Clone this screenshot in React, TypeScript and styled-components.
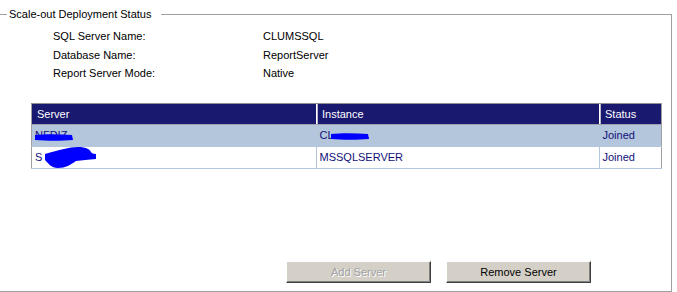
import * as React from "react"
import styled, { createGlobalStyle } from "styled-components"

const GlobalStyle = createGlobalStyle`
    html, body {
        margin: 0;
        padding: 0;
        background: #ffffff;
    }
    body {
        font-family: "Liberation Sans", Arial, sans-serif;
        font-size: 11px;
        color: #000000;
    }
`

interface ServerRow {
    server: string
    instance: string
    status: string
    selected: boolean
}

const ROWS: ServerRow[] = [
    { server: "NFDIZ", instance: "CL", status: "Joined", selected: true },
    { server: "S", instance: "MSSQLSERVER", status: "Joined", selected: false }
]

const INFO = [
    ["SQL Server Name:", "CLUMSSQL"],
    ["Database Name:", "ReportServer"],
    ["Report Server Mode:", "Native"]
]

const Scribble: React.FC<{ kind: "short" | "blob" }> = ({ kind }) =>
    kind === "short" ? (
        <svg width="40" height="9" viewBox="0 0 40 9">
            <path
                d="M1 2 C10 1 25 1 38 2 L39 7 C28 8 12 8 1 7 Z"
                fill="#0000ff"
            />
        </svg>
    ) : (
        <svg width="54" height="22" viewBox="0 0 54 22">
            <path
                d="M1 7 C8 5 14 3 20 2 C28 0 38 -1 44 2 C48 4 46 7 52 7 L52 12 C44 13 38 13 32 14 C26 18 22 21 14 21 C7 21 4 16 1 13 Z"
                fill="#0000ff"
            />
        </svg>
    )

const App: React.FC = () => {
    return (
        <>
            <GlobalStyle />
            <GroupBox>
                <Legend>Scale-out Deployment Status</Legend>
                <InfoGrid>
                    {INFO.map(([label, value]) => (
                        <React.Fragment key={label}>
                            <span>{label}</span>
                            <span>{value}</span>
                        </React.Fragment>
                    ))}
                </InfoGrid>
                <Table>
                    <thead>
                        <tr>
                            <HeadCell width={279}>Server</HeadCell>
                            <HeadCell width={277} divider>
                                Instance
                            </HeadCell>
                            <HeadCell divider>Status</HeadCell>
                        </tr>
                    </thead>
                    <tbody>
                        {ROWS.map((row, i) => (
                            <Row key={i} selected={row.selected}>
                                <Cell>
                                    {row.server}
                                    <Redact left={i === 0 ? 2 : 12} top={i === 0 ? 8 : 0}>
                                        <Scribble kind={i === 0 ? "short" : "blob"} />
                                    </Redact>
                                </Cell>
                                <Cell divider>
                                    {row.instance}
                                    {i === 0 && (
                                        <Redact left={13} top={7}>
                                            <Scribble kind="short" />
                                        </Redact>
                                    )}
                                </Cell>
                                <Cell divider>{row.status}</Cell>
                            </Row>
                        ))}
                    </tbody>
                </Table>
                <ButtonBar>
                    <Button disabled>Add Server</Button>
                    <Button>Remove Server</Button>
                </ButtonBar>
            </GroupBox>
        </>
    )
}

export default App

const GroupBox = styled.fieldset`
    box-sizing: border-box;
    width: 673px;
    height: 285px;
    margin: 7px 0 0 -1px;
    padding: 6px 0 0 0;
    border: 1px solid #a0a0a0;
    border-left: none;
    display: flex;
    flex-direction: column;
    min-inline-size: 0;
`

const Legend = styled.legend`
    margin-left: 8px;
    padding: 0 10px 0 2px;
    line-height: 14px;
    color: #000000;
`

const InfoGrid = styled.div`
    display: grid;
    grid-template-columns: 210px auto;
    grid-auto-rows: 18.5px;
    align-items: center;
    padding-left: 54px;
`

const Table = styled.table`
    margin: 20px 0 0 32px;
    width: 631px;
    border-collapse: collapse;
    table-layout: fixed;
    border: 1px solid #a0a0a0;
    border-top-color: #909090;
`

interface CellProps {
    width?: number
    divider?: boolean
}

const HeadCell = styled.th<CellProps>`
    width: ${props => (props.width ? `${props.width}px` : "auto")};
    height: 20px;
    padding: 0 0 0 ${props => (props.divider ? "6px" : "5px")};
    background: #191970;
    color: #ffffff;
    font-weight: normal;
    text-align: left;
    box-shadow: ${props =>
        props.divider ? "inset 1px 0 #ffffff, inset 2px 0 #b8b8c8" : "none"};
    border-bottom: 1px solid #a0a0b0;
`

const Row = styled.tr<{ selected: boolean }>`
    background: ${props => (props.selected ? "#b4c6dc" : "#ffffff")};
`

const Cell = styled.td<CellProps>`
    position: relative;
    height: 21px;
    padding: 0 0 0 3px;
    color: #10107a;
    border-left: ${props => (props.divider ? "1px solid #b4c6dc" : "none")};
    border-bottom: 1px solid #b4c6dc;
    white-space: nowrap;
    overflow: hidden;
`

const Redact = styled.span<{ left: number; top: number }>`
    position: absolute;
    left: ${props => props.left}px;
    top: ${props => props.top}px;
    line-height: 0;
`

const ButtonBar = styled.div`
    display: flex;
    gap: 15px;
    margin: auto 0 8px 287px;
`

const Button = styled.button`
    width: 145px;
    height: 22px;
    padding: 0;
    font-family: "Liberation Sans", Arial, sans-serif;
    font-size: 11px;
    color: #000000;
    background: #d4d0c8;
    border: 1px solid;
    border-color: #ffffff #404040 #404040 #ffffff;
    box-shadow: inset -1px -1px #808080;

    &:disabled {
        color: #a0a0a0;
        text-shadow: 1px 1px #ffffff;
    }
`
